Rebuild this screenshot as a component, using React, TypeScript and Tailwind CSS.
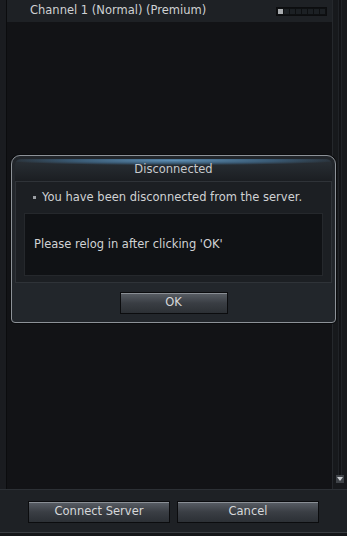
import React from 'react';

const font = { fontFamily: '"DejaVu Sans", "Liberation Sans", sans-serif' };

const GameButton: React.FC<{ label: string; className?: string }> = ({ label, className }) => (
  <button
    className={`h-[22px] border border-[#0b0c0e] bg-gradient-to-b from-[#5a5f66] via-[#3a3e44] to-[#2c3035] text-[11.5px] text-[#d6d8da] shadow-[inset_0_1px_0_#8a8f95] ${className ?? ''}`}
  >
    {label}
  </button>
);

const SignalBar: React.FC = () => (
  <div className="flex h-[9px] items-center gap-[1px] border border-[#0c0d0f] bg-[#0e1012] p-[1px]">
    <div className="h-full w-[5px] bg-[#a9acaf]" />
    {Array.from({ length: 7 }).map((_, i) => (
      <div key={i} className="h-full w-[5px] bg-[#1c2024]" />
    ))}
  </div>
);

const App: React.FC = () => {
  return (
    <div className="relative flex h-[536px] w-[347px] flex-col overflow-hidden bg-[#141619]" style={font}>
      {/* Server list area */}
      <div className="flex flex-1">
        <div className="w-[7px] border-r border-[#0b0c0e] bg-[#1a1c20]" />
        <div className="flex flex-1 flex-col border-r border-[#25282c] bg-[#121316]">
          <div className="flex h-[22px] items-center justify-between bg-[#1e2125] pl-[23px] pr-[5px]">
            <span className="text-[11.5px] leading-none text-[#cfd1d3]">Channel 1 (Normal) (Premium)</span>
            <SignalBar />
          </div>
          <div className="flex-1" />
        </div>
        {/* Scrollbar */}
        <div className="flex w-[14px] flex-col bg-[#17191c]">
          <div className="flex flex-1 justify-center">
            <div className="w-[4px] border-x border-[#202327] bg-[#121316]" />
          </div>
          <div className="mx-auto mb-[6px] flex h-[8px] w-[8px] items-center justify-center bg-[#3f4348]">
            <svg width="6" height="4" viewBox="0 0 6 4">
              <path d="M0 0h6L3 4z" fill="#c9ccd0" />
            </svg>
          </div>
        </div>
      </div>

      {/* Bottom bar */}
      <div className="flex h-[47px] flex-col border-t border-[#2c3035] bg-[#1e2125]">
        <div className="flex flex-1 items-center gap-[7px] pl-[28px] pt-[2px]">
          <GameButton label="Connect Server" className="w-[142px]" />
          <GameButton label="Cancel" className="w-[142px]" />
        </div>
        <div className="h-[4px] border-t border-[#3a3e43] bg-[#141619]" />
      </div>

      {/* Disconnected dialog */}
      <div className="absolute left-[11px] top-[155px] flex h-[168px] w-[325px] flex-col rounded-t-[9px] rounded-b-[4px] border border-[#8d9298] bg-[#22262b] p-[3px] shadow-[0_0_0_1px_#0b0c0e]">
        <div className="relative flex h-[22px] items-center justify-center overflow-hidden rounded-t-[6px] bg-gradient-to-b from-[#2a3036] to-[#1b1e22]">
          <div className="absolute inset-x-0 top-[-3px] h-[9px] bg-[radial-gradient(ellipse_at_center,#5d8db2_0%,#3a5a74_45%,transparent_75%)]" />
          <span className="relative text-[11.5px] text-[#c8cbce]">Disconnected</span>
        </div>
        <div className="flex h-[102px] flex-col border border-[#2f3338] bg-[#1c1f23] px-[8px]">
          <div className="flex h-[31px] items-center gap-[6px] pl-[9px]">
            <div className="h-[3px] w-[3px] bg-[#9a9ea3]" />
            <span className="text-[11.5px] text-[#d0d2d4]">You have been disconnected from the server.</span>
          </div>
          <div className="flex h-[63px] items-center border border-[#25282c] bg-[#101215] pl-[9px]">
            <span className="text-[11.5px] text-[#d0d2d4]">Please relog in after clicking 'OK'</span>
          </div>
        </div>
        <div className="flex flex-1 items-center justify-center pt-[3px]">
          <GameButton label="OK" className="w-[108px]" />
        </div>
      </div>
    </div>
  );
};

export default App;
